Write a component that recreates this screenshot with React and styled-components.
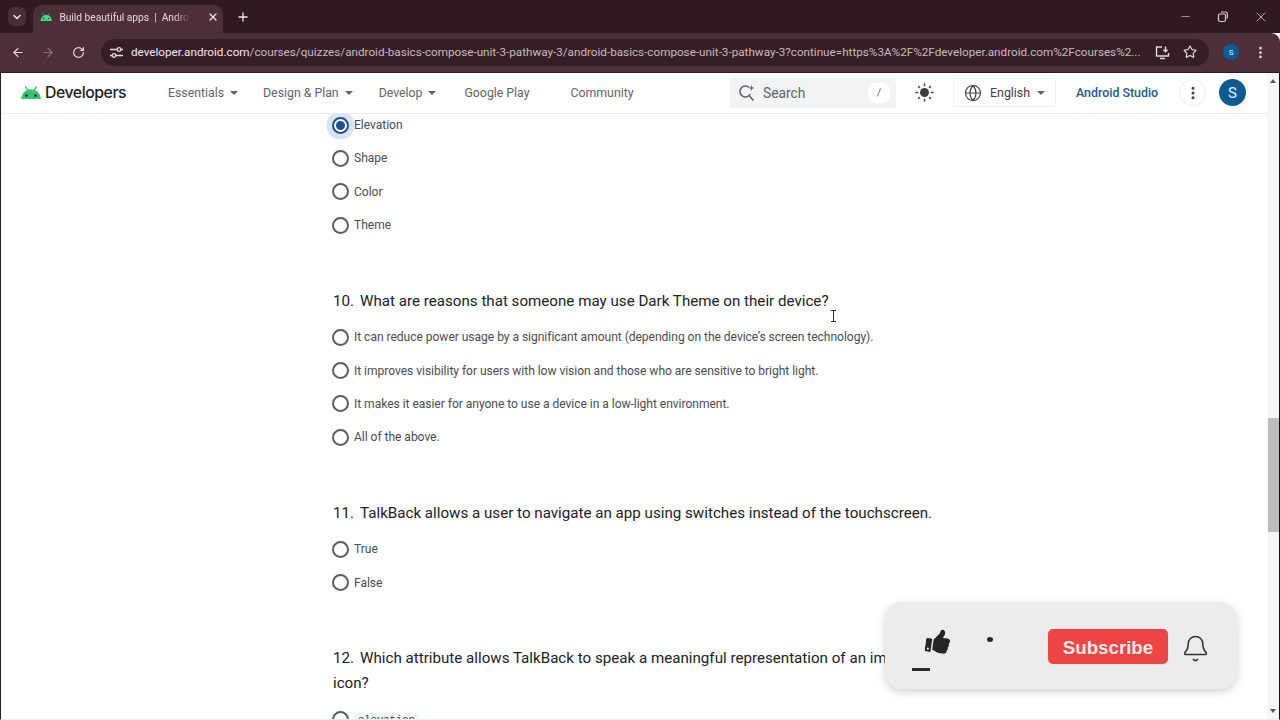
import React from "react";
import styled, { createGlobalStyle } from "styled-components";
import { ArrowLeft, ArrowRight, RotateCw, Star, X, Plus, ChevronDown, Minus, Bell, Globe, MoreVertical } from "lucide-react";
import { FaThumbsUp } from "react-icons/fa";

const Global = createGlobalStyle`
  html, body { margin: 0; padding: 0; background: #fff; }
  * { box-sizing: border-box; }
  body { font-family: Roboto, "Liberation Sans", sans-serif; }
`;

const Screen = styled.div`
  position: relative;
  width: 1280px;
  height: 720px;
  overflow: hidden;
  display: flex;
  flex-direction: column;
  background: #fff;
`;

const TabStrip = styled.div`
  height: 33px;
  flex: none;
  background: #2f1a20;
  display: flex;
  align-items: flex-end;
  padding-left: 8px;
  color: #f0e6e8;
`;
const TabList = styled.div`
  width: 18px;
  height: 19px;
  margin-bottom: 7px;
  border-radius: 6px;
  background: #4a2e35;
  display: flex;
  align-items: center;
  justify-content: center;
`;
const Tab = styled.div`
  width: 190px;
  height: 28px;
  margin-left: 7px;
  padding: 0 4px 4px 7px;
  border-radius: 9px 9px 0 0;
  background: #4d3037;
  display: flex;
  align-items: center;
  gap: 7px;
`;
const TabTitle = styled.span`
  width: 137px;
  font-size: 10.2px;
  white-space: pre;
  overflow: hidden;
  color: #e4d8da;
  -webkit-mask-image: linear-gradient(to right, #000 88%, transparent 100%);
  mask-image: linear-gradient(to right, #000 88%, transparent 100%);
`;
const TabClose = styled.span`
  margin-left: 10px;
  display: flex;
`;
const NewTab = styled.span`
  margin: 0 0 9px 13px;
  display: flex;
`;
const WindowControls = styled.div`
  margin-left: auto;
  height: 33px;
  display: flex;
  align-items: center;
  gap: 24px;
  padding-right: 11px;
  color: #d8cccf;
`;

const Toolbar = styled.div`
  height: 40px;
  flex: none;
  background: #4d3037;
  border-radius: 0 9px 0 0;
  border-bottom: 1px solid #2f1a20;
  display: flex;
  align-items: center;
  padding: 0 0 1px 11px;
  color: #e6dadc;
`;
const NavIcon = styled.span`
  width: 14px;
  display: flex;
  justify-content: center;
  margin-right: 16px;
  color: ${(p) => (p.$dim ? "#8a7278" : "#e6dadc")};
`;
const UrlBar = styled.div`
  width: 1108px;
  height: 27px;
  margin-left: 0;
  border-radius: 14px;
  background: #351f26;
  display: flex;
  align-items: center;
  padding: 0 11px 0 6px;
`;
const TuneBadge = styled.span`
  width: 18px;
  height: 18px;
  margin-right: 6px;
  display: flex;
  align-items: center;
  justify-content: center;
`;
const UrlText = styled.span`
  width: 1012px;
  font-size: 11.7px;
  white-space: nowrap;
  overflow: hidden;
  color: #c9babd;
  b { font-weight: 400; color: #f2eaec; }
`;
const UrlActions = styled.span`
  margin-left: 12px;
  display: flex;
  align-items: center;
  gap: 13px;
`;
const Profile = styled.span`
  width: 16px;
  height: 16px;
  margin-left: 14px;
  border-radius: 50%;
  background: #0f5a96;
  color: #e6f0f8;
  font-size: 8px;
  display: flex;
  align-items: center;
  justify-content: center;
`;
const ToolbarMenu = styled.span`
  margin-left: 14px;
  display: flex;
`;

const Viewport = styled.div`
  flex: 1;
  min-height: 0;
  display: flex;
  border-left: 1px solid #222;
  border-right: 1px solid #111;
  border-bottom: 1px solid #e4f5e6;
`;
const PageColumn = styled.div`
  flex: 1;
  min-width: 0;
  display: flex;
  flex-direction: column;
  overflow: hidden;
`;
const Header = styled.header`
  position: relative;
  z-index: 2;
  flex: none;
  height: 41px;
  background: #fff;
  border-bottom: 1px solid #e9eaeb;
  display: flex;
  align-items: center;
  padding: 0 20px 1px 19px;
`;
const Brand = styled.div`
  width: 148px;
  display: flex;
  align-items: center;
  gap: 3px;
  font-family: Inter, Roboto, sans-serif;
  font-size: 15.8px;
  font-weight: 500;
  letter-spacing: -0.45px;
  color: #202124;
`;
const Nav = styled.nav`
  width: 562px;
  display: flex;
  align-items: center;
`;
const NavItem = styled.span`
  display: flex;
  align-items: center;
  gap: 6px;
  margin-right: ${(p) => p.$gap}px;
  font-size: 12.3px;
  color: #5f6368;
  white-space: nowrap;
`;
const Caret = styled.i`
  width: 0;
  height: 0;
  margin-left: ${(p) => p.$shift || 0}px;
  border-left: 4px solid transparent;
  border-right: 4px solid transparent;
  border-top: 4.5px solid ${(p) => p.$color || "#5f6368"};
`;
const SearchBox = styled.div`
  width: 166px;
  height: 30px;
  background: #f1f3f4;
  display: flex;
  align-items: center;
  padding: 0 6px 0 8px;
  font-size: 13.8px;
  color: #5f6368;
  gap: 7px;
`;
const Slash = styled.span`
  margin-left: auto;
  width: 22px;
  height: 20px;
  border-radius: 7px;
  background: #fff;
  font-size: 11px;
  display: flex;
  align-items: center;
  justify-content: center;
`;
const ThemeToggle = styled.span`
  margin-left: 19px;
  display: flex;
`;
const LangBox = styled.div`
  width: 103px;
  height: 29px;
  margin-left: 19px;
  border: 1px solid #f0f1f2;
  display: flex;
  align-items: center;
  padding-left: 10px;
  gap: 8px;
  font-size: 12.4px;
  color: #3c4043;
`;
const Studio = styled.span`
  margin-left: 20px;
  width: 83px;
  font-size: 12.4px;
  font-weight: 500;
  color: #225a88;
  white-space: nowrap;
`;
const MoreBtn = styled.span`
  width: 27px;
  height: 27px;
  margin-left: 20px;
  border-radius: 50%;
  border: 1px solid #eceded;
  color: #3c4043;
  display: flex;
  align-items: center;
  justify-content: center;
`;
const Avatar = styled.span`
  width: 27px;
  height: 27px;
  margin-left: 13px;
  border-radius: 50%;
  background: #0b5a91;
  color: #e8f2f8;
  font-size: 15px;
  display: flex;
  align-items: center;
  justify-content: center;
`;

const Content = styled.main`
  margin-top: -5.7px;
  padding-left: 331px;
  display: flex;
  flex-direction: column;
`;
const Question = styled.h2`
  width: 620px;
  margin: 47px 0 6.6px 1px;
  font-size: 15.15px;
  line-height: 25px;
  font-weight: 400;
  color: #202124;
`;
const QNum = styled.span`
  margin-right: 6px;
`;
const Option = styled.div`
  height: 33.4px;
  flex: none;
  display: flex;
  align-items: center;
  gap: 5px;
  font-size: 12.1px;
  letter-spacing: -0.05px;
  color: #4a4d50;
  white-space: nowrap;
`;
const Radio = styled.span`
  position: relative;
  width: 17px;
  height: 17px;
  flex: none;
  border-radius: 50%;
  border: 2px solid ${(p) => (p.$on ? "#1c4f96" : "#5a5e62")};
  background: #fff;
  display: flex;
  align-items: center;
  justify-content: center;
  ${(p) =>
    p.$on &&
    `box-shadow: 0 0 0 5.5px #d6e4f5;
     &::after { content: ""; width: 9px; height: 9px; border-radius: 50%; background: #1c4f96; }`}
`;
const Code = styled.code`
  padding: 1px 4px;
  border-radius: 3px;
  background: #f1f3f4;
  font-family: "Liberation Mono", monospace;
  font-size: 10.6px;
  color: #37474f;
`;

const Scrollbar = styled.div`
  width: 12px;
  flex: none;
  background: #f6f6f6;
  display: flex;
  flex-direction: column;
  align-items: center;
  padding-top: 6px;
`;
const ArrowUp = styled.i`
  border-left: 3px solid transparent;
  border-right: 3px solid transparent;
  border-bottom: 4px solid #555;
`;
const ScrollThumb = styled.div`
  width: 11px;
  height: 114px;
  margin-top: 335px;
  background: #bdbdbd;
`;
const ArrowDown = styled.i`
  margin-top: auto;
  margin-bottom: 6px;
  border-left: 3px solid transparent;
  border-right: 3px solid transparent;
  border-top: 4px solid #555;
`;

const SubscribeCard = styled.aside`
  position: absolute;
  z-index: 3;
  left: 885px;
  top: 602px;
  width: 352px;
  height: 87px;
  border-radius: 17px;
  background: #ececec;
  box-shadow: 0 3px 8px rgba(0, 0, 0, 0.18);
  display: flex;
  align-items: flex-start;
  padding: 27px 0 0 27px;
`;
const LikeBlock = styled.div`
  width: 75px;
  display: flex;
  flex-direction: column;
  color: #262626;
`;
const Thumb = styled.span`
  margin-left: 14px;
  height: 24px;
  display: flex;
`;
const Dash = styled.i`
  width: 18px;
  height: 3px;
  margin-top: 15px;
  background: #2b2b2b;
`;
const Dot = styled.i`
  width: 6px;
  height: 5px;
  margin-top: 8px;
  border-radius: 50%;
  background: #262626;
`;
const SubscribeBtn = styled.div`
  width: 120px;
  height: 35px;
  margin-left: 55px;
  padding-top: 2px;
  border-radius: 5px;
  background: #ef4444;
  color: #fde8e8;
  font-family: "Liberation Sans", Arial, sans-serif;
  font-weight: 700;
  font-size: 18.7px;
  display: flex;
  align-items: center;
  justify-content: center;
`;
const BellWrap = styled.span`
  margin: 5px 0 0 13px;
  display: flex;
  color: #333;
`;
const TextCursor = styled.svg`
  position: absolute;
  z-index: 1;
  left: 830px;
  top: 310px;
`;

const Android = ({ w, color = "#3ddc84" }) => (
  <svg width={w} height={w * 0.62} viewBox="0 0 24 15">
    <path d="M1 15C1.5 8 6 3.5 12 3.5S22.500 8 23 15Z" fill={color} />
    <path d="M6 1l3 4M18 1l-3 4" stroke={color} strokeWidth="1.5" strokeLinecap="round" />
    <circle cx="7" cy="10.500" r="1.400" fill="#1c1c1c" />
    <circle cx="17" cy="10.500" r="1.400" fill="#1c1c1c" />
  </svg>
);

const Tune = () => (
  <svg width="15" height="13" viewBox="0 0 15 13" fill="none" stroke="#e6dadc" strokeWidth="1.300">
    <path d="M1 3.500h7M12 3.500h2M1 9.500h2M7 9.500h7" />
    <circle cx="10" cy="3.500" r="1.800" />
    <circle cx="5" cy="9.500" r="1.800" />
  </svg>
);

const Install = () => (
  <svg width="15" height="15" viewBox="0 0 15 15" fill="none" stroke="#e6dadc" strokeWidth="1.400">
    <path d="M7 2H1.500v9h12V8M5 13.500h5M10.500 1.500v5M8.500 4.800l2 2 2-2" />
  </svg>
);

const AiSearch = () => (
  <svg width="18" height="18" viewBox="0 0 18 18" fill="none" stroke="#5f6368" strokeWidth="1.600">
    <path d="M11 3.300A5.500 5.500 0 1 0 12.300 10M10.500 11l5 5.500" />
    <path d="M13.500 1l.8 2.200 2.200.8-2.200.8-.8 2.200-.8-2.200-2.200-.8 2.200-.8z" fill="#5f6368" stroke="none" />
  </svg>
);

const SunIcon = () => (
  <svg width="19" height="19" viewBox="0 0 19 19" fill="none" stroke="#3c4043" strokeWidth="1.500" strokeLinecap="round">
    <circle cx="9.500" cy="9.500" r="4.500" fill="#3c4043" stroke="none" />
    <path d="M9.500 1v1.500M9.500 16.500V18M1 9.500h1.500M16.500 9.500H18M3.500 3.500l1 1M14.500 14.500l1 1M3.500 15.500l1-1M14.500 4.500l1-1" />
  </svg>
);

const QUESTIONS = [
  { n: null, options: ["Elevation", "Shape", "Color", "Theme"], selected: 0 },
  {
    n: "10.",
    text: "What are reasons that someone may use Dark Theme on their device?",
    options: [
      "It can reduce power usage by a significant amount (depending on the device’s screen technology).",
      "It improves visibility for users with low vision and those who are sensitive to bright light.",
      "It makes it easier for anyone to use a device in a low-light environment.",
      "All of the above.",
    ],
  },
  {
    n: "11.",
    text: "TalkBack allows a user to navigate an app using switches instead of the touchscreen.",
    options: ["True", "False"],
  },
  {
    n: "12.",
    text: "Which attribute allows TalkBack to speak a meaningful representation of an image or icon?",
    options: [<Code key="c">elevation</Code>],
  },
];

const NAV = [
  { label: "Essentials", caret: true, gap: 25 },
  { label: "Design & Plan", caret: true, gap: 26 },
  { label: "Develop", caret: true, gap: 28 },
  { label: "Google Play", gap: 41 },
  { label: "Community", gap: 0 },
];

export default function App() {
  return (
    <Screen>
      <Global />
      <TabStrip>
        <TabList><ChevronDown size={12} strokeWidth={3} /></TabList>
        <Tab>
          <Android w={13} />
          <TabTitle>Build beautiful apps  |  Android Developers</TabTitle>
          <TabClose><X size={12} strokeWidth={2.4} /></TabClose>
        </Tab>
        <NewTab><Plus size={14} strokeWidth={2.2} /></NewTab>
        <WindowControls>
          <Minus size={13} strokeWidth={1.2} />
          <svg width="13" height="13" viewBox="0 0 13 13" fill="none" stroke="currentColor" strokeWidth="1.200">
            <rect x="2.500" y="4" width="7" height="7.500" rx="1.500" />
            <path d="M5 2h4.500A1.800 1.800 0 0 1 11.300 3.800V8.500" />
          </svg>
          <X size={16} strokeWidth={1.2} />
        </WindowControls>
      </TabStrip>
      <Toolbar>
        <NavIcon><ArrowLeft size={15} /></NavIcon>
        <NavIcon $dim><ArrowRight size={15} /></NavIcon>
        <NavIcon><RotateCw size={13} strokeWidth={2.2} /></NavIcon>
        <UrlBar>
          <TuneBadge><Tune /></TuneBadge>
          <UrlText>
            <b>developer.android.com</b>/courses/quizzes/android-basics-compose-unit-3-pathway-3/android-basics-compose-unit-3-pathway-3?continue=https%3A%2F%2Fdeveloper.android.com%2Fcourses%2...
          </UrlText>
          <UrlActions>
            <Install />
            <Star size={14} strokeWidth={2} />
          </UrlActions>
        </UrlBar>
        <Profile>S</Profile>
        <ToolbarMenu><MoreVertical size={15} strokeWidth={2.4} /></ToolbarMenu>
      </Toolbar>
      <Viewport>
        <PageColumn>
          <Header>
            <Brand><Android w={22} color="#36c46f" />Developers</Brand>
            <Nav>
              {NAV.map((item) => (
                <NavItem key={item.label} $gap={item.gap}>
                  {item.label}
                  {item.caret && <Caret />}
                </NavItem>
              ))}
            </Nav>
            <SearchBox><AiSearch />Search<Slash>/</Slash></SearchBox>
            <ThemeToggle><SunIcon /></ThemeToggle>
            <LangBox><Globe size={18} strokeWidth={1.500} />English<Caret $shift={-1} /></LangBox>
            <Studio>Android Studio</Studio>
            <MoreBtn><MoreVertical size={16} strokeWidth={2.6} /></MoreBtn>
            <Avatar>S</Avatar>
          </Header>
          <Content>
            {QUESTIONS.map((q, i) => (
              <React.Fragment key={i}>
                {q.n && <Question><QNum>{q.n}</QNum>{q.text}</Question>}
                {q.options.map((o, j) => (
                  <Option key={j}><Radio $on={q.selected === j} />{o}</Option>
                ))}
              </React.Fragment>
            ))}
          </Content>
        </PageColumn>
        <Scrollbar>
          <ArrowUp />
          <ScrollThumb />
          <ArrowDown />
        </Scrollbar>
      </Viewport>
      <TextCursor width="7" height="12" viewBox="0 0 7 12" fill="none" stroke="#333" strokeWidth="1">
        <path d="M1 .5h5M3.500.5v11M1 11.500h5" />
      </TextCursor>
      <SubscribeCard>
        <LikeBlock>
          <Thumb><FaThumbsUp size={24} style={{ transform: "rotate(8deg)" }} /></Thumb>
          <Dash />
        </LikeBlock>
        <Dot />
        <SubscribeBtn>Subscribe</SubscribeBtn>
        <BellWrap><Bell size={29} strokeWidth={1.300} /></BellWrap>
      </SubscribeCard>
    </Screen>
  );
}
